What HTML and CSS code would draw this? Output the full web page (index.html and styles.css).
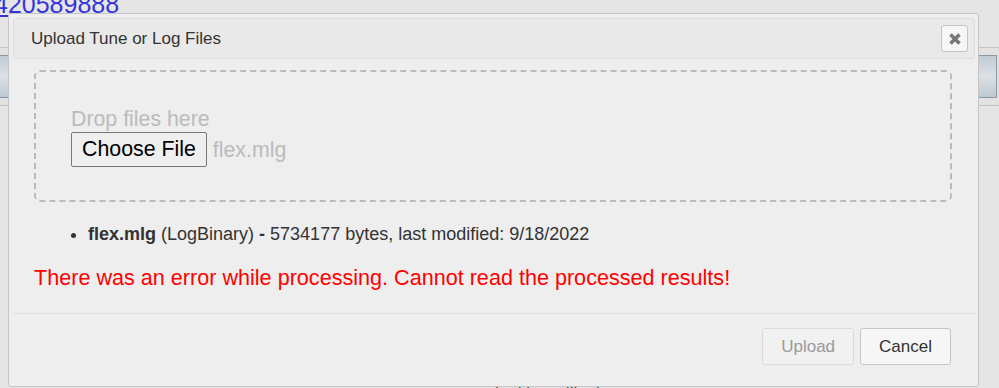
FILE: index.html
```html
<!DOCTYPE html>
<html lang="en">
<head>
<meta charset="utf-8">
<title>Upload Tune or Log Files</title>
<link rel="stylesheet" href="styles.css">
</head>
<body>
<div class="page">
  <a class="tune-link" href="#">420589888</a>
  <div class="toolbar"><div class="toolbar-inner"></div></div>
  <p class="page-note">looking will take a moment</p>
</div>
<div class="overlay"></div>
<div class="dialog" role="dialog" aria-labelledby="dlg-title">
  <div class="titlebar">
    <span class="title" id="dlg-title">Upload Tune or Log Files</span>
    <button class="close" type="button" aria-label="Close">
      <svg width="14" height="14" viewBox="0 0 14 14"><path d="M2.5 2.5L11.5 11.5M11.5 2.5L2.5 11.5" stroke="#777" stroke-width="3.6" fill="none"/></svg>
    </button>
  </div>
  <div class="content">
    <div class="dropzone">
      <div class="drop-label">Drop files here</div>
      <div class="file-row">
        <button class="choose" type="button">Choose File</button>
        <span class="file-name">flex.mlg</span>
      </div>
    </div>
    <ul class="files">
      <li><b>flex.mlg</b> (LogBinary) <b>-</b> 5734177 bytes, last modified: 9/18/2022</li>
    </ul>
    <p class="error">There was an error while processing. Cannot read the processed results!</p>
  </div>
  <div class="buttonpane">
    <button class="btn btn-disabled" type="button" disabled>Upload</button>
    <button class="btn" type="button">Cancel</button>
  </div>
</div>
</body>
</html>
```
FILE: styles.css
```css
html, body {
  margin: 0;
  padding: 0;
}
body {
  background: #ffffff;
  font-family: "Liberation Sans", Arial, sans-serif;
  width: 999px;
  height: 388px;
  overflow: hidden;
  position: relative;
}
.page {
  display: flex;
  flex-direction: column;
}
.tune-link {
  display: block;
  font-size: 25px;
  line-height: 30px;
  margin-top: -11px;
  margin-left: -6px;
  color: #0000ee;
  text-decoration: underline;
  align-self: flex-start;
}
.toolbar {
  margin-top: 28px;
  border-top: 1px solid #d0d0d0;
  border-bottom: 1px solid #d0d0d0;
  background: #fbfbfb;
  padding: 7px 2px 7px 0;
}
.toolbar-inner {
  height: 41px;
  margin-left: -2px;
  border: 1px solid #7c93a7;
  background: linear-gradient(#c9dceb, #f4f8fb 50%, #c4d7e6);
}
.page-note {
  margin: 278px 0 0 495px;
  font-size: 17px;
  line-height: 20px;
  color: #222;
}
.overlay {
  position: fixed;
  inset: 0;
  background: #aaaaaa;
  opacity: 0.3;
}
.dialog {
  position: absolute;
  left: 8px;
  top: 13px;
  width: 971px;
  height: 374px;
  box-sizing: border-box;
  border: 1px solid #c5c5c5;
  border-radius: 3px;
  background: #eeeeee;
  padding: 4px 3px 4px 4px;
  display: flex;
  flex-direction: column;
  color: #333333;
  font-size: 17px;
}
.titlebar {
  height: 41px;
  box-sizing: border-box;
  border: 1px solid #dddddd;
  border-radius: 3px;
  background: #e9e9e9;
  display: flex;
  align-items: center;
  justify-content: space-between;
  padding: 0 6px 0 17px;
  flex: none;
}
.title {
  font-size: 17px;
  line-height: 20px;
  color: #333333;
}
.close {
  width: 27px;
  height: 27px;
  box-sizing: border-box;
  border: 1px solid #c5c5c5;
  border-radius: 3px;
  background: #f6f6f6;
  padding: 0;
  display: flex;
  align-items: center;
  justify-content: center;
}
.content {
  flex: 1;
  padding: 0 23px 0 21px;
}
.dropzone {
  margin-top: 11px;
  height: 132px;
  box-sizing: border-box;
  border: 2px dashed #bbbbbb;
  border-radius: 6px;
  padding: 35px 35px 0;
  font-size: 21.33px;
  color: #bbbbbb;
}
.drop-label {
  line-height: 24px;
}
.file-row {
  margin-top: 1px;
  display: flex;
  align-items: center;
  gap: 6px;
}
.choose {
  height: 35px;
  box-sizing: border-box;
  padding: 0 10px;
  border: 1px solid #767676;
  border-radius: 2px;
  background: #efefef;
  color: #000000;
  font-family: inherit;
  font-size: 21.33px;
}
.file-name {
  line-height: 24px;
}
.files {
  margin: 22px 0 0;
  padding-left: 54px;
  font-size: 18px;
  line-height: 21px;
  color: #333333;
}
.error {
  margin: 21px 0 0;
  font-size: 21.6px;
  line-height: 24px;
  color: #ff0000;
}
.buttonpane {
  flex: none;
  border-top: 1px solid #dddddd;
  padding: 14px 24px 17px 0;
  display: flex;
  justify-content: flex-end;
  gap: 6px;
}
.btn {
  height: 37px;
  box-sizing: border-box;
  padding: 0 18px;
  border: 1px solid #c5c5c5;
  border-radius: 3px;
  background: #f6f6f6;
  color: #333333;
  font-family: inherit;
  font-size: 17px;
}
.btn-disabled {
  color: #9a9a9a;
  border-color: #dadada;
  background: #f1f1f1;
}
```
